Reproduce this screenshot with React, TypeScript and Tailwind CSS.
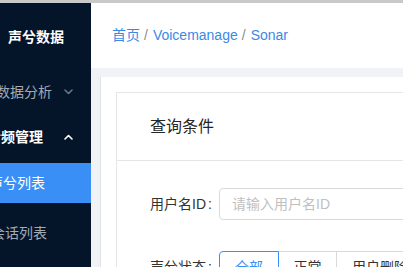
const Chevron = ({ up = false, color }: { up?: boolean; color: string }) => (
  <svg width="9" height="6" viewBox="0 0 9 6" className="ml-auto mr-[18px]">
    <polyline
      points={up ? '1,5 4.5,1.5 8,5' : '1,1 4.5,4.5 8,1'}
      fill="none"
      stroke={color}
      strokeWidth="1.6"
      strokeLinecap="round"
      strokeLinejoin="round"
    />
  </svg>
);

export default function App() {
  return (
    <div className="h-[267px] w-[403px] overflow-hidden bg-[#f0f2f5] font-['Liberation_Sans','Noto_Sans_CJK_SC',sans-serif]">
      <div className="h-[3px] bg-[#c9c9c9]" />
      <div className="flex h-[264px]">
        {/* sidebar */}
        <aside className="w-[91px] shrink-0 overflow-hidden whitespace-nowrap bg-[#04152a] text-[14px]">
          <div className="flex h-[68px] items-center pl-[8px] font-semibold text-white">声兮数据</div>
          <div className="flex h-[42px] items-center text-[#a3aab3]">
            <span className="ml-[-4px]">数据分析</span>
            <Chevron color="#6b7480" />
          </div>
          <div className="flex h-[48px] items-center font-semibold text-white">
            <span className="ml-[-13px]">音频管理</span>
            <Chevron up color="#ffffff" />
          </div>
          <div className="mt-[2px] flex h-[40px] items-center bg-[#3a8ff7] text-white">
            <span className="ml-[-11px]">声兮列表</span>
          </div>
          <div className="flex h-[60px] items-center text-[#a3aab3]">
            <span className="ml-[-9px]">会话列表</span>
          </div>
        </aside>

        {/* main */}
        <main className="flex min-w-0 flex-1 flex-col">
          <header className="flex h-[65px] shrink-0 items-center whitespace-nowrap bg-white pl-[21px] text-[14px]">
            <span className="text-[#3a8ae4]">首页</span>
            <span className="ml-[4px] mr-[5px] text-[#8c8c8c]">/</span>
            <span className="text-[#3a8ae4]">Voicemanage</span>
            <span className="ml-[4px] mr-[5px] text-[#8c8c8c]">/</span>
            <span className="text-[#3a8ae4]">Sonar</span>
          </header>

          <div className="flex-1 pl-[9px] pt-[9px]">
            <div className="h-full border-l border-[#dfe1e6] bg-white pl-[15px] pt-[15px]">
              <div className="h-full w-[400px] border-l border-t border-[#e6e6e6]">
                <div className="flex h-[68px] items-center border-b border-[#e6e6e6] pl-[33px] text-[16px] text-[#262626]">
                  查询条件
                </div>
                <div className="pl-[33px] pt-[27px] text-[14px] text-[#333]">
                  <div className="flex h-[32px] items-center whitespace-nowrap">
                    <span className="w-[69px] shrink-0">
                      用户名ID<span className="ml-[2px]">:</span>
                    </span>
                    <div className="flex h-[32px] w-[280px] shrink-0 items-center rounded-[4px] border border-[#d9d9d9] pl-[12px] text-[#bfbfbf]">
                      请输入用户名ID
                    </div>
                  </div>
                  <div className="mt-[31px] flex h-[32px] items-center whitespace-nowrap">
                    <span className="w-[69px] shrink-0">
                      声兮状态<span className="ml-[2px]">:</span>
                    </span>
                    <div className="flex h-[32px] shrink-0">
                      <div className="flex w-[60px] items-center justify-center rounded-l-[4px] border border-[#3a8ff7] text-[#3a8ff7]">
                        全部
                      </div>
                      <div className="flex w-[58px] items-center justify-center border-y border-r border-[#d9d9d9]">
                        正常
                      </div>
                      <div className="flex items-center border-y border-r border-[#d9d9d9] px-[15px]">
                        用户删除
                      </div>
                    </div>
                  </div>
                </div>
              </div>
            </div>
          </div>
        </main>
      </div>
    </div>
  );
}
